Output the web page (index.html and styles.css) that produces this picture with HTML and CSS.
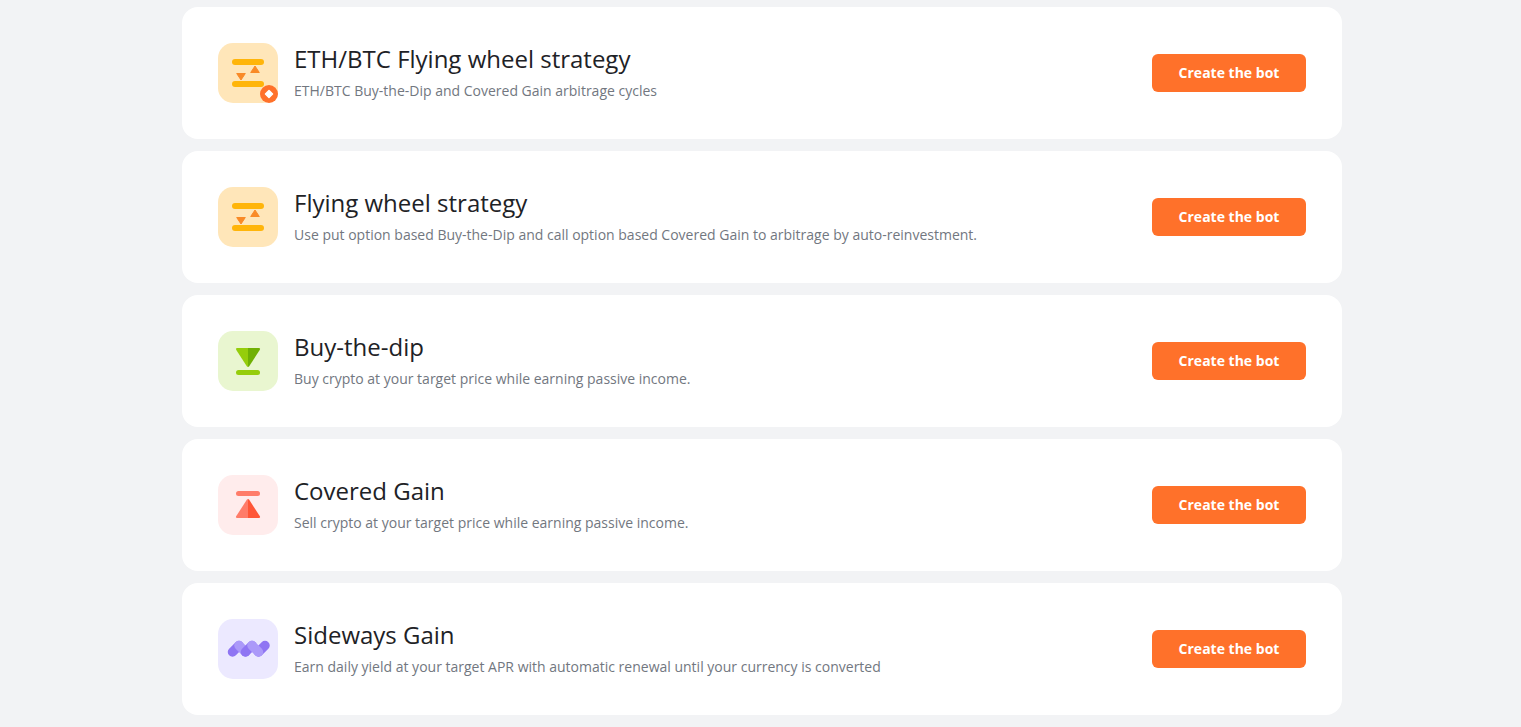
FILE: index.html
```html
<!DOCTYPE html>
<html lang="en">
<head>
<meta charset="utf-8">
<title>Trading bots</title>
<link rel="stylesheet" href="styles.css">
</head>
<body>
<main class="bots">
  <article class="card">
    <svg class="icon" viewBox="0 0 60 60" aria-hidden="true">
      <rect width="60" height="60" rx="15" fill="#ffe6b9"/>
      <rect x="14" y="16" width="32" height="6" rx="3" fill="#ffb50a"/>
      <rect x="14" y="38" width="32" height="6" rx="3" fill="#ffb50a"/>
      <path d="M37 23l4.300 6.500h-8.600zM23 37l-4.300-6.500h8.600z" fill="#f98a27" stroke="#f98a27" stroke-linejoin="round"/>
      <circle cx="51" cy="51" r="9" fill="#ff712a"/>
      <path d="M51 47.500l3.500 3.500-3.500 3.500-3.500-3.500z" fill="#fff" stroke="#fff" stroke-width="1.500" stroke-linejoin="round"/>
    </svg>
    <div class="info">
      <h2 class="title">ETH/BTC Flying wheel strategy</h2>
      <p class="desc">ETH/BTC Buy-the-Dip and Covered Gain arbitrage cycles</p>
    </div>
    <button class="create" type="button">Create the bot</button>
  </article>
  <article class="card">
    <svg class="icon" viewBox="0 0 60 60" aria-hidden="true">
      <rect width="60" height="60" rx="15" fill="#ffe6b9"/>
      <rect x="14" y="16" width="32" height="6" rx="3" fill="#ffb50a"/>
      <rect x="14" y="38" width="32" height="6" rx="3" fill="#ffb50a"/>
      <path d="M37 23l4.300 6.500h-8.600zM23 37l-4.300-6.500h8.600z" fill="#f98a27" stroke="#f98a27" stroke-linejoin="round"/>
    </svg>
    <div class="info">
      <h2 class="title">Flying wheel strategy</h2>
      <p class="desc">Use put option based Buy-the-Dip and call option based Covered Gain to arbitrage by auto-reinvestment.</p>
    </div>
    <button class="create" type="button">Create the bot</button>
  </article>
  <article class="card">
    <svg class="icon" viewBox="0 0 60 60" aria-hidden="true">
      <rect width="60" height="60" rx="15" fill="#e9f6d0"/>
      <path d="M30 17H19.200q-2 0-.9 1.900l10.500 16.300q.6.800 1.200.8z" fill="#95cd0b"/>
      <path d="M30 17h10.800q2 0 .9 1.900L31.200 35.200q-.6.800-1.200.8z" fill="#70b004"/>
      <rect x="18" y="39" width="24" height="5" rx="2.500" fill="#95cd0b"/>
    </svg>
    <div class="info">
      <h2 class="title">Buy-the-dip</h2>
      <p class="desc">Buy crypto at your target price while earning passive income.</p>
    </div>
    <button class="create" type="button">Create the bot</button>
  </article>
  <article class="card">
    <svg class="icon" viewBox="0 0 60 60" aria-hidden="true">
      <rect width="60" height="60" rx="15" fill="#ffecec"/>
      <rect x="18" y="16" width="24" height="5" rx="2.500" fill="#ff7c69"/>
      <path d="M30 43H19.200q-2 0-.9-1.900l10.500-16.300q.6-.8 1.200-.8z" fill="#ff7c69"/>
      <path d="M30 43h10.800q2 0 .9-1.900L31.200 24.800q-.6-.8-1.200-.8z" fill="#ff5637"/>
    </svg>
    <div class="info">
      <h2 class="title">Covered Gain</h2>
      <p class="desc">Sell crypto at your target price while earning passive income.</p>
    </div>
    <button class="create" type="button">Create the bot</button>
  </article>
  <article class="card">
    <svg class="icon" viewBox="0 0 60 60" aria-hidden="true">
      <rect width="60" height="60" rx="15" fill="#ece9ff"/>
      <g fill="none" stroke-width="9.500" stroke-linecap="round">
        <path d="M14.500 33l6.500-6.500M40.500 33l6.500-6.500" stroke="#8f75f3"/>
        <path d="M21 26.500l6.500 6.500" stroke="#ab99f9"/>
        <path d="M27.500 33l6.500-6.500" stroke="#8f75f3"/>
        <path d="M34 26.500l6.500 6.500" stroke="#ab99f9"/>
      </g>
    </svg>
    <div class="info">
      <h2 class="title">Sideways Gain</h2>
      <p class="desc">Earn daily yield at your target APR with automatic renewal until your currency is converted</p>
    </div>
    <button class="create" type="button">Create the bot</button>
  </article>
</main>
</body>
</html>
```
FILE: styles.css
```css
* {
  box-sizing: border-box;
}

body {
  margin: 0;
  padding: 7px 0 12px 3px;
  background: #f2f3f5;
  font-family: "Open Sans", "Noto Sans", sans-serif;
}

.bots {
  display: flex;
  flex-direction: column;
  gap: 12px;
  max-width: 1160px;
  margin: 0 auto;
}

.card {
  display: flex;
  align-items: center;
  gap: 16px;
  padding: 36px;
  border-radius: 16px;
  background: #fff;
}

.icon {
  flex: none;
  width: 60px;
  height: 60px;
}

.info {
  flex: 1;
  min-width: 0;
  padding-bottom: 2px;
}

.title {
  margin: 0;
  color: #1e2226;
  font-size: 24px;
  font-weight: 400;
  line-height: 32px;
}

.desc {
  margin: 6px 0 0;
  color: #72777f;
  font-size: 14px;
  line-height: 20px;
}

.create {
  flex: none;
  min-width: 154px;
  padding: 9px 24px;
  border: 0;
  border-radius: 6px;
  background: #ff712a;
  color: #fff;
  font-family: inherit;
  font-size: 14px;
  font-weight: 700;
  line-height: 20px;
  cursor: pointer;
}
```
